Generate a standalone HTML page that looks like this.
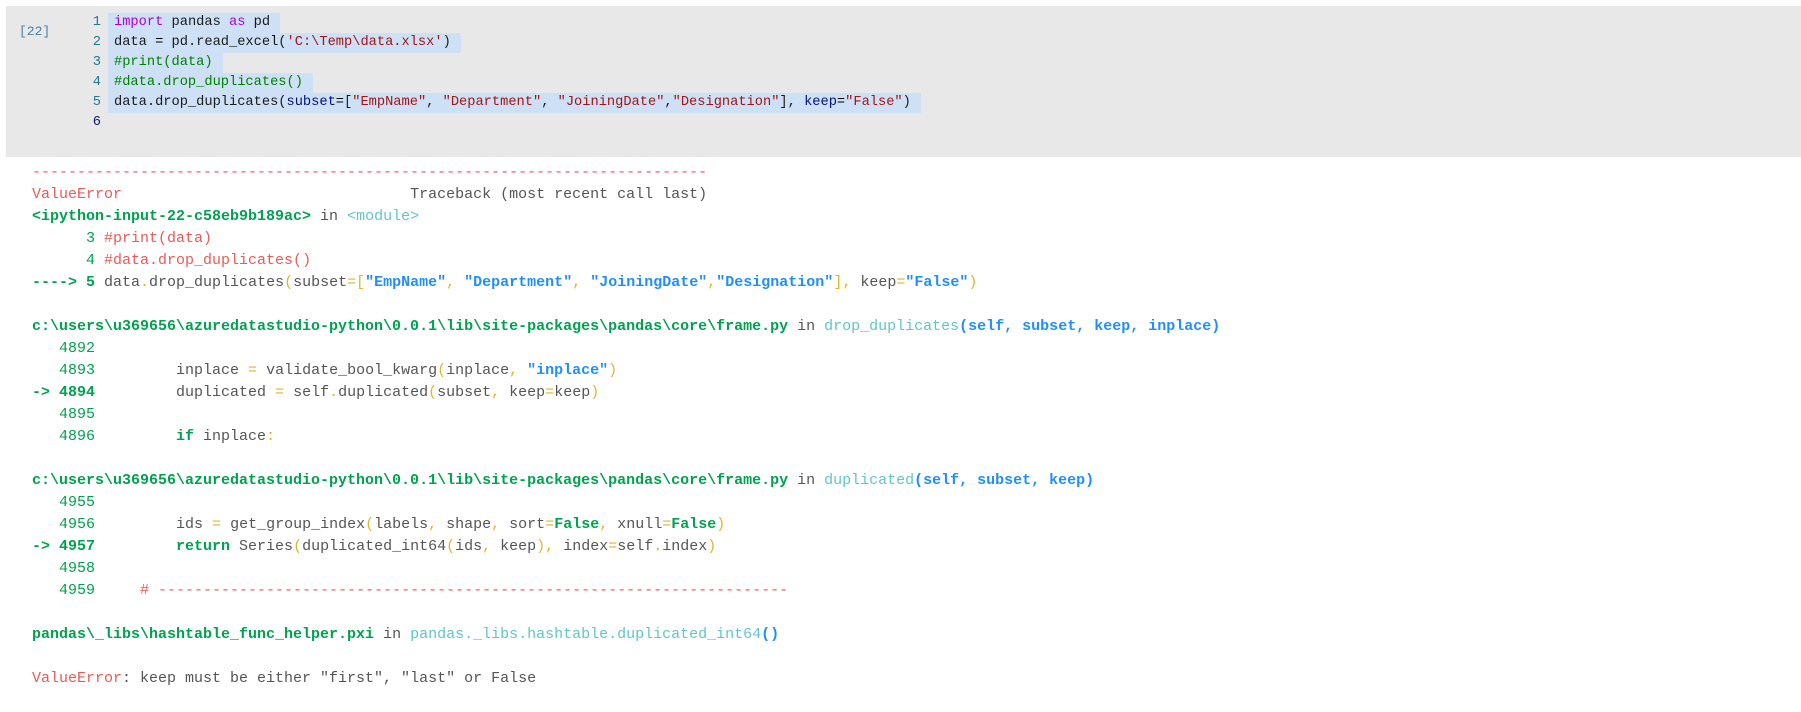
<!DOCTYPE html>
<html><head><meta charset="utf-8"><style>
html,body{margin:0;padding:0;background:#fff;width:1801px;height:712px;overflow:hidden}
.cell{position:absolute;left:6px;top:6px;width:1795px;height:151px;background:#e8e8e8}
.cnt{position:absolute;left:19px;top:24px;font:13px "Liberation Mono",monospace;color:#4a7fa5}
.code{position:absolute;left:0;top:13px;font:13.7px "Liberation Mono",monospace;line-height:20px;white-space:pre}
.ln{position:absolute;left:70px;width:31px;text-align:right;color:#237893}
.tx{position:absolute;left:108px;color:#1a1a1a}
.hl{background:#cde0f5;padding:0 10px 0 6px;display:inline-block;height:20px}
.kw{color:#af00db}.st{color:#a31515}.cm{color:#008000}.bk{color:#000}
.out{position:absolute;left:32px;top:162px;font:15px "Liberation Mono",monospace;line-height:22px;white-space:pre;color:#555}
.r{color:#e75c58}.g{color:#00a250}.gb{color:#00a250;font-weight:bold}.c{color:#60c6c8}.b{color:#208ffb;font-weight:bold}.y{color:#ddb62b}
</style></head><body>
<div class="cell"></div>
<div class="cnt">[22]</div>
<div class="code">
<div class="ln" style="top:0">1</div><div class="ln" style="top:20px">2</div><div class="ln" style="top:40px">3</div><div class="ln" style="top:60px">4</div><div class="ln" style="top:80px">5</div><div class="ln" style="top:100px;color:#0b216f">6</div>
<div class="tx" style="top:0"><span class="hl"><span class="kw">import</span> pandas <span class="kw">as</span> pd</span></div>
<div class="tx" style="top:20px"><span class="hl">data <span class="bk">=</span> pd.read_excel(<span class="st">'C:\Temp\data.xlsx'</span>)</span></div>
<div class="tx" style="top:40px"><span class="hl"><span class="cm">#print(data)</span></span></div>
<div class="tx" style="top:60px"><span class="hl"><span class="cm">#data.drop_duplicates()</span></span></div>
<div class="tx" style="top:80px"><span class="hl">data.drop_duplicates(<span style="color:#001080">subset</span><span class="bk">=</span>[<span class="st">"EmpName"</span>, <span class="st">"Department"</span>, <span class="st">"JoiningDate"</span>,<span class="st">"Designation"</span>], <span style="color:#001080">keep</span><span class="bk">=</span><span class="st">"False"</span>)</span></div>
</div>
<div class="out"><span class="r">---------------------------------------------------------------------------</span>
<span class="r">ValueError</span>                                Traceback (most recent call last)
<span class="gb">&lt;ipython-input-22-c58eb9b189ac&gt;</span> in <span class="c">&lt;module&gt;</span>
<span class="g">      3</span> <span class="r">#print(data)</span>
<span class="g">      4</span> <span class="r">#data.drop_duplicates()</span>
<span class="gb">----&gt; 5</span> data<span class="y">.</span>drop_duplicates<span class="y">(</span>subset<span class="y">=[</span><span class="b">"EmpName"</span><span class="y">,</span> <span class="b">"Department"</span><span class="y">,</span> <span class="b">"JoiningDate"</span><span class="y">,</span><span class="b">"Designation"</span><span class="y">],</span> keep<span class="y">=</span><span class="b">"False"</span><span class="y">)</span>

<span class="gb">c:\users\u369656\azuredatastudio-python\0.0.1\lib\site-packages\pandas\core\frame.py</span> in <span class="c">drop_duplicates</span><span class="b">(self, subset, keep, inplace)</span>
<span class="g">   4892</span> 
<span class="g">   4893</span>         inplace <span class="y">=</span> validate_bool_kwarg<span class="y">(</span>inplace<span class="y">,</span> <span class="b">"inplace"</span><span class="y">)</span>
<span class="gb">-&gt; 4894</span>         duplicated <span class="y">=</span> self<span class="y">.</span>duplicated<span class="y">(</span>subset<span class="y">,</span> keep<span class="y">=</span>keep<span class="y">)</span>
<span class="g">   4895</span> 
<span class="g">   4896</span>         <span class="gb">if</span> inplace<span class="y">:</span>

<span class="gb">c:\users\u369656\azuredatastudio-python\0.0.1\lib\site-packages\pandas\core\frame.py</span> in <span class="c">duplicated</span><span class="b">(self, subset, keep)</span>
<span class="g">   4955</span> 
<span class="g">   4956</span>         ids <span class="y">=</span> get_group_index<span class="y">(</span>labels<span class="y">,</span> shape<span class="y">,</span> sort<span class="y">=</span><span class="gb">False</span><span class="y">,</span> xnull<span class="y">=</span><span class="gb">False</span><span class="y">)</span>
<span class="gb">-&gt; 4957</span>         <span class="gb">return</span> Series<span class="y">(</span>duplicated_int64<span class="y">(</span>ids<span class="y">,</span> keep<span class="y">),</span> index<span class="y">=</span>self<span class="y">.</span>index<span class="y">)</span>
<span class="g">   4958</span> 
<span class="g">   4959</span>     <span class="r"># ----------------------------------------------------------------------</span>

<span class="gb">pandas\_libs\hashtable_func_helper.pxi</span> in <span class="c">pandas._libs.hashtable.duplicated_int64</span><span class="b">()</span>

<span class="r">ValueError</span>: keep must be either "first", "last" or False</div>
</body></html>
